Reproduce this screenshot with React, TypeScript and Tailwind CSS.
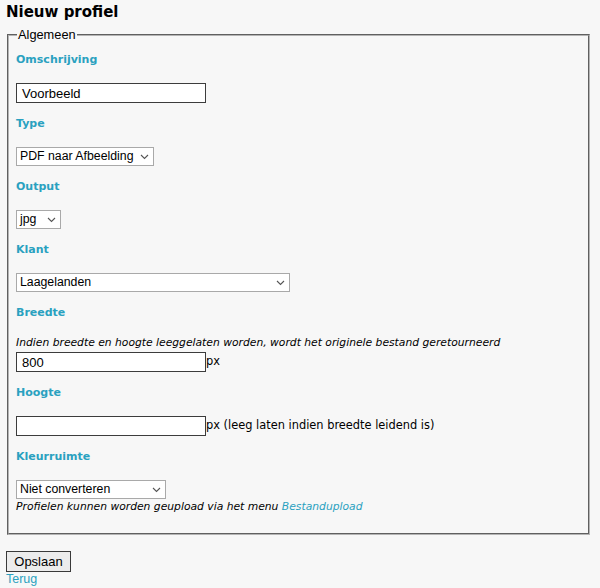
import React from "react";

const Chevron = () => (
  <svg width="9" height="6" viewBox="0 0 9 6" className="shrink-0">
    <path d="M1 1 L4.5 4.5 L8 1" fill="none" stroke="#555" strokeWidth="1.1" />
  </svg>
);

const Select = ({ value, w }: { value: string; w: string }) => (
  <div
    className={`flex h-[19px] items-center justify-between border border-[#a9a9a9] bg-white pl-[3px] pr-[4px] text-[12.3px] text-black ${w}`}
    style={{ fontFamily: '"Liberation Sans", Arial, sans-serif' }}
  >
    <span className="leading-none">{value}</span>
    <Chevron />
  </div>
);

const TextInput = ({ value }: { value?: string }) => (
  <div
    className="flex h-[20px] w-[190px] items-center border border-[#3c3c3c] bg-white px-[5px] text-[13px] text-black"
    style={{ fontFamily: '"Liberation Sans", Arial, sans-serif' }}
  >
    <span className="leading-none">{value}</span>
  </div>
);

const Label = ({ children }: { children: React.ReactNode }) => (
  <div className="mt-[14px] mb-[16px] h-[14px] text-[11px] font-bold leading-[14px] text-[#2aa1c0]">{children}</div>
);

export default function App() {
  return (
    <div
      className="min-h-[588px] w-[600px] bg-[#f7f7f7] pl-[6px] pr-[10px] pt-[3px] text-[11px] text-black"
      style={{ fontFamily: '"DejaVu Sans", Verdana, sans-serif' }}
    >
      <h1 className="h-[18px] text-[15px] font-bold leading-[18px]">Nieuw profiel</h1>
      <fieldset className="mt-[7px] ml-[1px] h-[507px] border-2 border-[#b4b4b4] px-[7px] pt-0 pb-0 [border-style:groove]">
        <legend
          className="ml-[1px] px-[1px] text-[12.8px] leading-[14px]"
          style={{ fontFamily: '"Liberation Sans", Arial, sans-serif' }}
        >
          Algemeen
        </legend>
        <div className="-mt-[3px]">
          <Label>Omschrijving</Label>
          <TextInput value="Voorbeeld" />
          <Label>Type</Label>
          <Select value="PDF naar Afbeelding" w="w-[138px]" />
          <Label>Output</Label>
          <Select value="jpg" w="w-[45px]" />
          <Label>Klant</Label>
          <Select value="Laagelanden" w="w-[274px]" />
          <Label>Breedte</Label>
          <div className="-mt-[1px] h-[17px] text-[10.75px] italic leading-[16px]">
            Indien breedte en hoogte leeggelaten worden, wordt het originele bestand geretourneerd
          </div>
          <div className="flex items-center">
            <TextInput value="800" />
            <span className="text-[11.4px] leading-none">px</span>
          </div>
          <Label>Hoogte</Label>
          <div className="flex items-center">
            <TextInput />
            <span className="text-[11.4px] leading-none">px (leeg laten indien breedte leidend is)</span>
          </div>
          <Label>Kleurruimte</Label>
          <Select value="Niet converteren" w="w-[150px]" />
          <div className="h-[16px] text-[10.75px] italic leading-[16px]">
            Profielen kunnen worden geupload via het menu{" "}
            <a className="text-[#2aa1c0]">Bestandupload</a>
          </div>
        </div>
      </fieldset>
      <div className="mt-[16px]">
        <button
          className="h-[21px] w-[65px] border border-[#3a3a3a] bg-[#ececec] text-[13px] leading-none text-black"
          style={{ fontFamily: '"Liberation Sans", Arial, sans-serif' }}
        >
          Opslaan
        </button>
      </div>
      <a
        className="block text-[12.5px] leading-[14px] text-[#2aa1c0]"
        style={{ fontFamily: '"Liberation Sans", Arial, sans-serif' }}
      >
        Terug
      </a>
    </div>
  );
}
